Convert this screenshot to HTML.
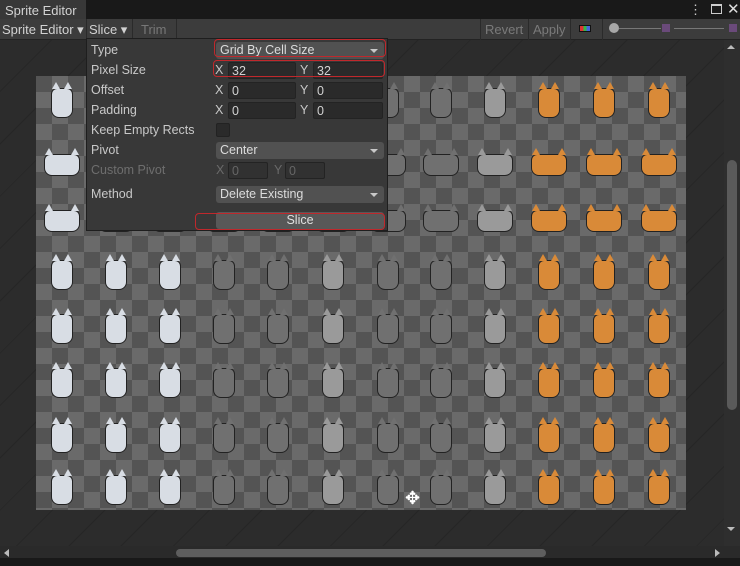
<!DOCTYPE html>
<html><head><style>
*{margin:0;padding:0;box-sizing:border-box}
body{width:740px;height:566px;overflow:hidden;background:#2a2a2a;font-family:"Liberation Sans",sans-serif;font-size:12.5px;color:#c8c8c8;position:relative}
.abs{position:absolute}
#title{left:0;top:0;width:740px;height:19px;background:#191919}
#tab{left:0;top:0;width:86px;height:20px;background:#383838;color:#d2d2d2;padding:3px 5px;font-size:13px}
#tb{left:0;top:19px;width:740px;height:21px;background:#3c3c3c;border-bottom:1px solid #232323}
.tbt{position:absolute;top:3px;font-size:13px}
.sep{position:absolute;top:0;width:1px;height:21px;background:#2a2a2a}
#main{left:0;top:40px;width:724px;height:506px;background:repeating-linear-gradient(135deg,#2c2c2c 0 36px,#262626 36px 37px)}
#sheet{left:36px;top:76px;width:650px;height:434px;background-color:#545454;background-image:linear-gradient(45deg,#6a6a6a 25%,transparent 25%,transparent 75%,#6a6a6a 75%),linear-gradient(45deg,#6a6a6a 25%,transparent 25%,transparent 75%,#6a6a6a 75%);background-size:32px 32px;background-position:0 0,16px 16px}
.cat{position:absolute;width:22px;height:30px;border-radius:6px 6px 8px 8px;border:1px solid #222}
.cat:before,.cat:after{content:"";position:absolute;top:-7px;width:0;height:0;border-left:4px solid transparent;border-right:4px solid transparent;border-bottom:7px solid var(--c)}
.cat:before{left:0}.cat:after{right:0}
#vs{left:724px;top:40px;width:16px;height:506px;background:#2e2e2e}
#hs{left:0;top:546px;width:740px;height:12px;background:#2a2a2a}
#bot{left:0;top:558px;width:740px;height:8px;background:#191919}
#pop{left:86px;top:38px;width:302px;height:193px;background:#383838;border:1px solid #1e1e1e;z-index:5}
.lbl{position:absolute;left:4px;font-size:12.5px;color:#c8c8c8}
.dd{position:absolute;left:129px;width:168px;height:17px;background:#515151;border-radius:3px;padding:1px 4px;color:#dcdcdc}
.dd:after{content:"";position:absolute;right:6px;top:7px;border-left:4px solid transparent;border-right:4px solid transparent;border-top:4px solid #c8c8c8}
.fld{position:absolute;height:17px;background:#2a2a2a;border-radius:2px;padding:1px 3px;color:#d2d2d2;border:1px solid #232323}
.xy{position:absolute;color:#c8c8c8}
.red{position:absolute;border:1px solid #c0282c;border-radius:4px}
</style></head><body>
<div id="title" class="abs"></div>
<div id="tab" class="abs">Sprite Editor</div>
<div class="abs" style="right:38px;top:2px;color:#ccc;font-size:13px">⋮</div>
<div class="abs" style="left:711px;top:4px;width:11px;height:10px;border:1px solid #ccc;border-top-width:2px"></div>
<div class="abs" style="left:727px;top:0px;color:#ddd;font-size:15px">✕</div>
<div id="tb" class="abs">
 <span class="tbt" style="left:2px;color:#d2d2d2">Sprite Editor ▾</span>
 <div class="sep" style="left:86px"></div>
 <span class="tbt" style="left:89px;color:#d2d2d2">Slice ▾</span>
 <div class="sep" style="left:132px"></div>
 <span class="tbt" style="left:141px;color:#777">Trim</span>
 <div class="sep" style="left:176px"></div>
 <div class="sep" style="left:480px"></div>
 <span class="tbt" style="left:485px;color:#7a7a7a">Revert</span>
 <div class="sep" style="left:528px"></div>
 <span class="tbt" style="left:533px;color:#7a7a7a">Apply</span>
 <div class="sep" style="left:570px"></div>
 <div class="abs" style="left:579px;top:6px;width:12px;height:7px;background:linear-gradient(90deg,#d33 0 33%,#3b4 33% 66%,#46d 66%);border:1px solid #111"></div>
 <div class="sep" style="left:602px"></div>
 <div class="abs" style="left:609px;top:4px;width:10px;height:10px;border-radius:50%;background:#a8a8a8"></div>
 <div class="abs" style="left:619px;top:9px;width:42px;height:1px;background:#777"></div>
 <div class="abs" style="left:662px;top:5px;width:8px;height:8px;background:#6a4a7a"></div>
 <div class="abs" style="left:674px;top:9px;width:50px;height:1px;background:#777"></div>
 <div class="abs" style="left:729px;top:5px;width:8px;height:8px;background:#6a4a7a"></div>
</div>
<div id="main" class="abs"></div>
<div id="sheet" class="abs"></div>
<div id="cats"></div>
<div id="vs" class="abs"><div class="abs" style="left:3px;top:120px;width:10px;height:250px;border-radius:5px;background:#5a5a5a"></div></div>
<div class="abs" style="left:727px;top:45px;border-left:4px solid transparent;border-right:4px solid transparent;border-bottom:4px solid #bbb"></div>
<div class="abs" style="left:727px;top:527px;border-left:4px solid transparent;border-right:4px solid transparent;border-top:4px solid #bbb"></div>
<div id="hs" class="abs"><div class="abs" style="left:176px;top:3px;width:370px;height:8px;border-radius:4px;background:#5e5e5e"></div></div>
<div class="abs" style="left:4px;top:549px;border-top:4px solid transparent;border-bottom:4px solid transparent;border-right:5px solid #bbb"></div>
<div class="abs" style="left:715px;top:549px;border-top:4px solid transparent;border-bottom:4px solid transparent;border-left:5px solid #bbb"></div>
<div id="bot" class="abs"></div>
<div class="abs" style="left:405px;top:488px;color:#fff;font-size:18px">✥</div>
<div id="pop" class="abs">
 <span class="lbl" style="top:4px">Type</span>
 <div class="dd" style="top:3px">Grid By Cell Size</div>
 <div class="red" style="left:127px;top:0px;width:172px;height:18px"></div>
 <span class="lbl" style="top:24px">Pixel Size</span>
 <span class="xy" style="left:128px;top:24px">X</span><div class="fld" style="left:141px;top:23px;width:68px">32</div>
 <span class="xy" style="left:213px;top:24px">Y</span><div class="fld" style="left:226px;top:23px;width:70px">32</div>
 <div class="red" style="left:126px;top:21px;width:172px;height:17px"></div>
 <span class="lbl" style="top:44px">Offset</span>
 <span class="xy" style="left:128px;top:44px">X</span><div class="fld" style="left:141px;top:43px;width:68px">0</div>
 <span class="xy" style="left:213px;top:44px">Y</span><div class="fld" style="left:226px;top:43px;width:70px">0</div>
 <span class="lbl" style="top:64px">Padding</span>
 <span class="xy" style="left:128px;top:64px">X</span><div class="fld" style="left:141px;top:63px;width:68px">0</div>
 <span class="xy" style="left:213px;top:64px">Y</span><div class="fld" style="left:226px;top:63px;width:70px">0</div>
 <span class="lbl" style="top:84px">Keep Empty Rects</span>
 <div class="abs" style="left:129px;top:84px;width:14px;height:14px;background:#2a2a2a;border:1px solid #222;border-radius:2px"></div>
 <span class="lbl" style="top:104px">Pivot</span>
 <div class="dd" style="top:103px">Center</div>
 <span class="lbl" style="top:124px;color:#6e6e6e">Custom Pivot</span>
 <span class="xy" style="left:129px;top:124px;color:#6a6a6a">X</span><div class="fld" style="left:141px;top:123px;width:40px;color:#666;background:#313131">0</div>
 <span class="xy" style="left:187px;top:124px;color:#6a6a6a">Y</span><div class="fld" style="left:198px;top:123px;width:40px;color:#666;background:#313131">0</div>
 <span class="lbl" style="top:148px">Method</span>
 <div class="dd" style="top:147px">Delete Existing</div>
 <div class="abs" style="left:129px;top:173px;width:168px;height:17px;background:#585858;border-radius:3px;text-align:center;color:#e0e0e0;padding-top:1px">Slice</div>
 <div class="red" style="left:108px;top:174px;width:190px;height:17px"></div>
</div>
<script>
var xs=[62,116,170,224,278,333,388,441,495,549,604,659],ys=[100,162,218,272,326,380,435,487];
var h='';
for(var r=0;r<8;r++)for(var c=0;c<12;c++){
 var col=c<3?'#d8dde4':(c<9?(c%3==2?'#9a9a9a':'#707070'):'#d98a38');
 var w=(r==1||r==2)?36:22,hh=(r==1||r==2)?22:30;
 h+='<div class="cat" style="--c:'+col+';background:'+col+';left:'+(xs[c]-w/2)+'px;top:'+(ys[r]-hh/2+3)+'px;width:'+w+'px;height:'+hh+'px"></div>';
}
document.getElementById('cats').innerHTML=h;
</script>
</body></html>
